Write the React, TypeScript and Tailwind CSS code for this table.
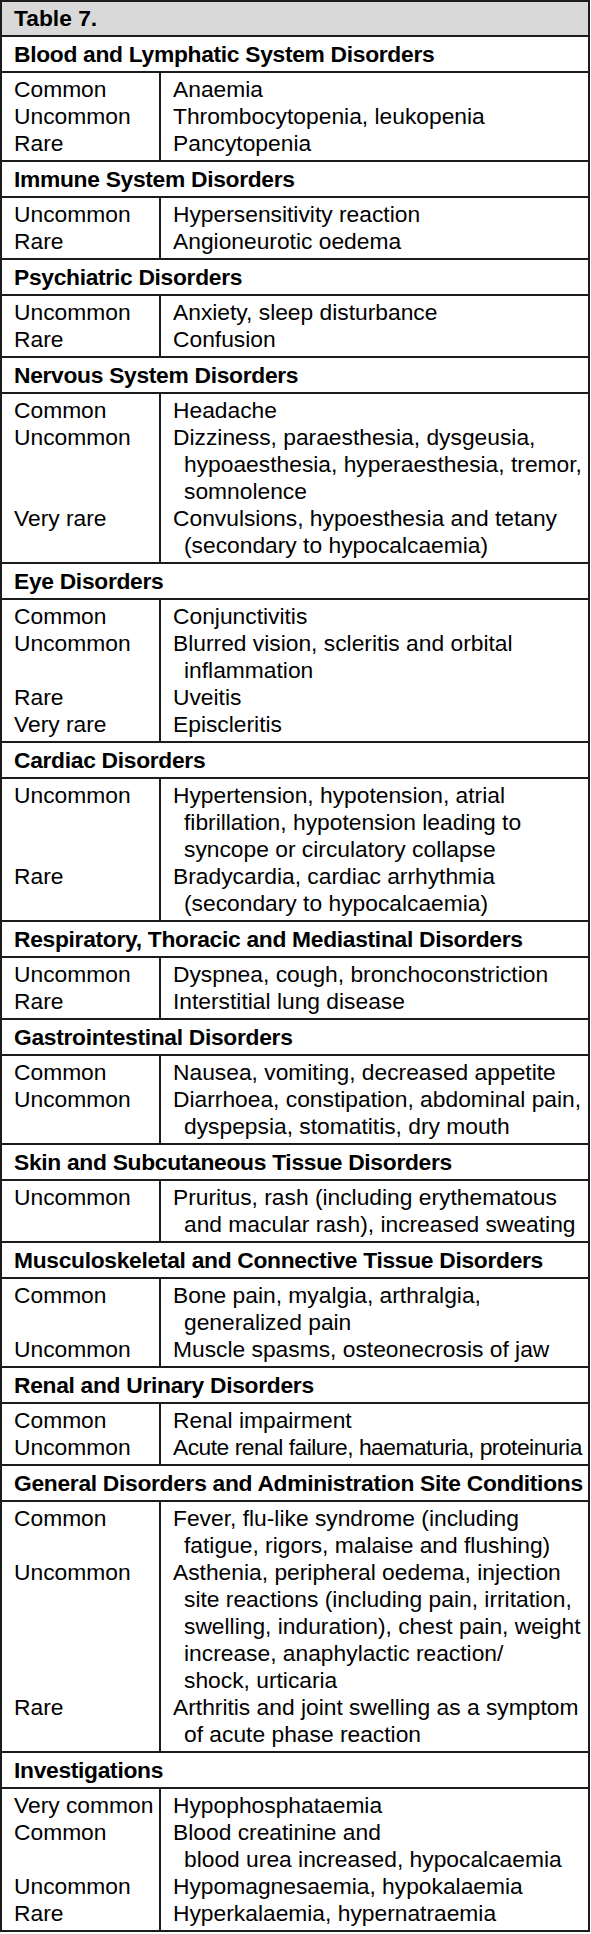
import React from 'react'

type Entry = { label: string; lines: string[] }
type Section = { title: string; entries: Entry[] }

// lines that the printed table squeezes to fit the column
const tight = new Set(['Acute renal failure, haematuria, proteinuria'])

const sections: Section[] = [
  {
    title: 'Blood and Lymphatic System Disorders',
    entries: [
      { label: 'Common', lines: ['Anaemia'] },
      { label: 'Uncommon', lines: ['Thrombocytopenia, leukopenia'] },
      { label: 'Rare', lines: ['Pancytopenia'] },
    ],
  },
  {
    title: 'Immune System Disorders',
    entries: [
      { label: 'Uncommon', lines: ['Hypersensitivity reaction'] },
      { label: 'Rare', lines: ['Angioneurotic oedema'] },
    ],
  },
  {
    title: 'Psychiatric Disorders',
    entries: [
      { label: 'Uncommon', lines: ['Anxiety, sleep disturbance'] },
      { label: 'Rare', lines: ['Confusion'] },
    ],
  },
  {
    title: 'Nervous System Disorders',
    entries: [
      { label: 'Common', lines: ['Headache'] },
      {
        label: 'Uncommon',
        lines: ['Dizziness, paraesthesia, dysgeusia,', 'hypoaesthesia, hyperaesthesia, tremor,', 'somnolence'],
      },
      { label: 'Very rare', lines: ['Convulsions, hypoesthesia and tetany', '(secondary to hypocalcaemia)'] },
    ],
  },
  {
    title: 'Eye Disorders',
    entries: [
      { label: 'Common', lines: ['Conjunctivitis'] },
      { label: 'Uncommon', lines: ['Blurred vision, scleritis and orbital', 'inflammation'] },
      { label: 'Rare', lines: ['Uveitis'] },
      { label: 'Very rare', lines: ['Episcleritis'] },
    ],
  },
  {
    title: 'Cardiac Disorders',
    entries: [
      {
        label: 'Uncommon',
        lines: ['Hypertension, hypotension, atrial', 'fibrillation, hypotension leading to', 'syncope or circulatory collapse'],
      },
      { label: 'Rare', lines: ['Bradycardia, cardiac arrhythmia', '(secondary to hypocalcaemia)'] },
    ],
  },
  {
    title: 'Respiratory, Thoracic and Mediastinal Disorders',
    entries: [
      { label: 'Uncommon', lines: ['Dyspnea, cough, bronchoconstriction'] },
      { label: 'Rare', lines: ['Interstitial lung disease'] },
    ],
  },
  {
    title: 'Gastrointestinal Disorders',
    entries: [
      { label: 'Common', lines: ['Nausea, vomiting, decreased appetite'] },
      { label: 'Uncommon', lines: ['Diarrhoea, constipation, abdominal pain,', 'dyspepsia, stomatitis, dry mouth'] },
    ],
  },
  {
    title: 'Skin and Subcutaneous Tissue Disorders',
    entries: [
      { label: 'Uncommon', lines: ['Pruritus, rash (including erythematous', 'and macular rash), increased sweating'] },
    ],
  },
  {
    title: 'Musculoskeletal and Connective Tissue Disorders',
    entries: [
      { label: 'Common', lines: ['Bone pain, myalgia, arthralgia,', 'generalized pain'] },
      { label: 'Uncommon', lines: ['Muscle spasms, osteonecrosis of jaw'] },
    ],
  },
  {
    title: 'Renal and Urinary Disorders',
    entries: [
      { label: 'Common', lines: ['Renal impairment'] },
      { label: 'Uncommon', lines: ['Acute renal failure, haematuria, proteinuria'] },
    ],
  },
  {
    title: 'General Disorders and Administration Site Conditions',
    entries: [
      { label: 'Common', lines: ['Fever, flu-like syndrome (including', 'fatigue, rigors, malaise and flushing)'] },
      {
        label: 'Uncommon',
        lines: [
          'Asthenia, peripheral oedema, injection',
          'site reactions (including pain, irritation,',
          'swelling, induration), chest pain, weight',
          'increase, anaphylactic reaction/',
          'shock, urticaria',
        ],
      },
      { label: 'Rare', lines: ['Arthritis and joint swelling as a symptom', 'of acute phase reaction'] },
    ],
  },
  {
    title: 'Investigations',
    entries: [
      { label: 'Very common', lines: ['Hypophosphataemia'] },
      { label: 'Common', lines: ['Blood creatinine and', 'blood urea increased, hypocalcaemia'] },
      { label: 'Uncommon', lines: ['Hypomagnesaemia, hypokalaemia'] },
      { label: 'Rare', lines: ['Hyperkalaemia, hypernatraemia'] },
    ],
  },
]

export default function App() {
  return (
    <div className="bg-white w-[591px] font-['Liberation_Sans',Arial,sans-serif] text-[22.8px] leading-[27px] text-black">
      <div className="w-[590px] border-2 border-[#1c1c1c]">
        <div className="h-[33px] bg-[#d9d9d9] pl-3 flex items-center font-bold">Table 7.</div>

        {sections.map(s => (
          <div key={s.title}>
            <div className="h-[36px] border-t-2 border-[#1c1c1c] pl-3 flex items-center font-bold whitespace-nowrap tracking-[-0.3px]">
              {s.title}
            </div>
            <div className="border-t-2 border-[#1c1c1c]">
              {s.entries.map((e, i) => {
                const pad =
                  (i === 0 ? 'pt-[3px] ' : '') + (i === s.entries.length - 1 ? 'pb-[3px]' : '')
                return (
                  <div key={e.label + i} className="grid grid-cols-[159px_1fr]">
                    <div className={'border-r-2 border-[#1c1c1c] pl-3 whitespace-nowrap ' + pad}>{e.label}</div>
                    <div className={'pl-3 whitespace-nowrap ' + pad}>
                      {e.lines.map((l, j) => (
                        <div
                          key={j}
                          className={(j > 0 ? 'pl-[11px] ' : '') + (tight.has(l) ? 'tracking-[-0.5px]' : '')}
                        >
                          {l}
                        </div>
                      ))}
                    </div>
                  </div>
                )
              })}
            </div>
          </div>
        ))}
      </div>
    </div>
  )
}
